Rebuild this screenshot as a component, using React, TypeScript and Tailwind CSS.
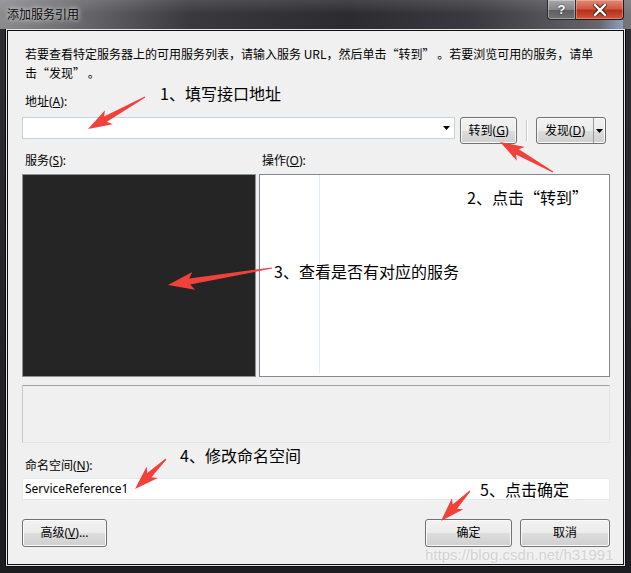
import React from 'react';

const ui = "font-['Noto_Sans','Noto_Sans_CJK_SC',sans-serif]";
const cjk = "font-['Noto_Sans_CJK_SC','Noto_Sans',sans-serif]";
const btn =
  'flex items-center justify-center rounded-[3px] border border-[#707070] bg-[linear-gradient(to_bottom,#f2f2f2_0%,#ebebeb_50%,#dddddd_51%,#cfcfcf_100%)] shadow-[inset_0_0_0_1px_#fbfbfb] text-[12px] text-black';

// tapered red arrow from tail to tip, as the snipping tool draws it
function arrow(tx: number, ty: number, hx: number, hy: number, head = 20, wing = 8) {
  const len = Math.hypot(hx - tx, hy - ty);
  const dx = (hx - tx) / len;
  const dy = (hy - ty) / len;
  const nx = -dy;
  const ny = dx;
  const neckX = hx - dx * head;
  const neckY = hy - dy * head;
  const backX = neckX - dx * 4;
  const backY = neckY - dy * 4;
  const p = (x: number, y: number) => `${x.toFixed(1)},${y.toFixed(1)}`;
  return [
    p(tx + nx * 0.6, ty + ny * 0.6),
    p(neckX + nx * 3, neckY + ny * 3),
    p(backX + nx * wing, backY + ny * wing),
    p(hx, hy),
    p(backX - nx * wing, backY - ny * wing),
    p(neckX - nx * 3, neckY - ny * 3),
    p(tx - nx * 0.6, ty - ny * 0.6),
  ].join(' ');
}

const arrows = [
  { t: [145, 97], h: [88, 129], head: 20, wing: 8 },
  { t: [553, 172], h: [500, 142], head: 20, wing: 8 },
  { t: [272, 268], h: [168, 285], head: 22, wing: 9 },
  { t: [166, 459], h: [135, 489], head: 20, wing: 8 },
  { t: [470, 491], h: [441, 521], head: 20, wing: 8 },
];

const notes = [
  { text: '1、填写接口地址', cls: 'left-[160px] top-[82px]' },
  { text: '2、点击“转到”', cls: 'left-[467px] top-[186px]' },
  { text: '3、查看是否有对应的服务', cls: 'left-[274px] top-[260px]' },
  { text: '4、修改命名空间', cls: 'left-[180px] top-[444px]' },
  { text: '5、点击确定', cls: 'left-[480px] top-[478px]' },
];

function TitleBar() {
  return (
    <div className="relative h-[29px] bg-[linear-gradient(to_right,#8c8c90_0%,#6a6a6e_12%,#3a393e_30%,#2c2b30_55%,#3b3a40_75%,#5e5d63_92%,#77767c_100%)]">
      <div className="absolute inset-x-0 top-0 h-[14px] bg-[linear-gradient(to_bottom,rgba(255,255,255,0.12),rgba(255,255,255,0))]" />
      <div
        className={`absolute left-[7px] top-[6px] text-[12px] leading-[16px] text-[#0a0a0a] ${cjk} [text-shadow:0_0_4px_#d8d8d8,0_0_6px_#cfcfcf]`}
      >
        添加服务引用
      </div>
      <div className="absolute right-[7px] top-0 flex h-[20px]">
        <div className="flex w-[29px] items-center justify-center rounded-bl-[4px] border border-t-0 border-[#2a2a2e] bg-[linear-gradient(to_bottom,#a9a9ad_0%,#85858a_50%,#5d5d62_51%,#707075_100%)] shadow-[inset_0_0_0_1px_rgba(255,255,255,0.35)]">
          <span className="font-['Liberation_Sans',sans-serif] text-[13px] font-bold leading-none text-white [text-shadow:0_0_2px_#222]">
            ?
          </span>
        </div>
        <div className="flex w-[48px] items-center justify-center rounded-br-[4px] border border-l-0 border-t-0 border-[#2a1410] bg-[linear-gradient(to_bottom,#e08a78_0%,#cf5a44_45%,#b8301c_55%,#d2553b_100%)] shadow-[inset_0_0_0_1px_rgba(255,220,210,0.35)]">
          <svg width="14" height="12" viewBox="0 0 14 12">
            <path d="M2 1 L12 11 M12 1 L2 11" stroke="#3a1a14" strokeWidth="4.2" strokeLinecap="square" />
            <path d="M2 1 L12 11 M12 1 L2 11" stroke="#fff" strokeWidth="2.4" strokeLinecap="square" />
          </svg>
        </div>
      </div>
      <div className="absolute right-[8px] top-[20px] h-[9px] w-[24px] bg-[linear-gradient(to_right,rgba(120,160,210,0),rgba(150,190,235,0.6))]" />
    </div>
  );
}

function Label({ children }: { children: React.ReactNode }) {
  return <div className={`text-[12px] leading-[16px] text-black ${ui}`}>{children}</div>;
}

export default function App() {
  return (
    <div className={`relative h-[573px] w-[631px] overflow-hidden bg-[linear-gradient(to_bottom,#2e2e33,#1d1d21)] ${ui}`}>
      <TitleBar />

      {/* client area */}
      <div className="mx-[6px] h-[537px] border border-[#e6e6e6] shadow-[0_0_0_1px_#0b0b0b]">
        <div className="flex h-full flex-col border border-[#0f0f0f] bg-[#f0f0f0] pl-[14px] pr-[13px]">
          <div className={`mt-[13px] whitespace-nowrap pl-[3px] text-[12px] leading-[19px] text-black ${cjk}`}>
            若要查看特定服务器上的可用服务列表，请输入服务 URL，然后单击“转到” 。若要浏览可用的服务，请单
            <br />
            击“发现” 。
          </div>

          <div className="mt-[12px] pl-[3px]">
            <Label>
              地址(<u>A</u>):
            </Label>
          </div>

          <div className="mt-[7px] flex items-start">
            <div className="flex h-[22px] w-[433px] items-center justify-end border border-[#c4d3e3] bg-white pr-[4px]">
              <svg width="7" height="4" viewBox="0 0 7 4">
                <path d="M0 0 H7 L3.5 4 Z" fill="#000" />
              </svg>
            </div>
            <div className={`${btn} ml-[5px] h-[27px] w-[57px]`}>
              转到(<u>G</u>)
            </div>
            <div className="ml-[9px] mt-[3px] h-[21px] w-[2px] border-l border-[#c9c9c9] bg-white" />
            <div className={`${btn} ml-[8px] h-[27px] w-[70px] justify-start overflow-hidden`}>
              <div className="flex h-full flex-1 items-center justify-center border-r border-[#9a9a9a]">
                发现(<u>D</u>)
              </div>
              <div className="flex h-full w-[11px] items-center justify-center">
                <svg width="7" height="4" viewBox="0 0 7 4">
                  <path d="M0 0 H7 L3.5 4 Z" fill="#000" />
                </svg>
              </div>
            </div>
          </div>

          <div className="mt-[9px] flex pl-[3px]">
            <div className="w-[237px]">
              <Label>
                服务(<u>S</u>):
              </Label>
            </div>
            <Label>
              操作(<u>O</u>):
            </Label>
          </div>

          <div className="mt-[5px] flex h-[203px] gap-[3px]">
            <div className="w-[234px] border border-[#8e9299] bg-[#252525]" />
            <div className="flex flex-1 border border-[#828790] bg-white pb-[3px]">
              <div className="w-[60px] border-r border-[#e3edf5]" />
            </div>
          </div>

          <div className="mt-[8px] h-[58px] border border-[#a0a0a0] border-l-[#c8c8c8] border-r-[#e4e4e4] border-b-[#e4e4e4] bg-[#f0f0f0]" />

          <div className="mt-[15px] pl-[3px]">
            <Label>
              命名空间(<u>N</u>):
            </Label>
          </div>

          <div className="mt-[4px] flex h-[22px] items-center border border-[#e3e9ef] bg-white pl-[2px] text-[12px] text-black">
            ServiceReference1
          </div>

          <div className="mt-[19px] flex items-start">
            <div className={`${btn} h-[28px] w-[85px]`}>
              高级(<u>V</u>)...
            </div>
            <div className="flex-1" />
            <div className={`${btn} h-[28px] w-[87px] border-[#3c7fb1] shadow-[inset_0_0_0_1px_#97dcf5]`}>确定</div>
            <div className={`${btn} ml-[8px] h-[28px] w-[90px]`}>取消</div>
          </div>
        </div>
      </div>

      {/* annotations over the dialog */}
      <svg className="pointer-events-none absolute inset-0" width="631" height="573">
        {arrows.map((a, i) => (
          <polygon key={i} points={arrow(a.t[0], a.t[1], a.h[0], a.h[1], a.head, a.wing)} fill="#f2403a" />
        ))}
      </svg>
      {notes.map((n) => (
        <div
          key={n.text}
          className={`absolute ${n.cls} whitespace-nowrap text-[16px] leading-[22px] text-black ${cjk}`}
        >
          {n.text}
        </div>
      ))}
      <div className="absolute left-[425px] top-[545px] whitespace-nowrap font-['Liberation_Sans',sans-serif] text-[15px] leading-[20px] text-[#d2d2d2] [text-shadow:0_0_2px_rgba(255,255,255,0.9)]">
        https://blog.csdn.net/h31991
      </div>
    </div>
  );
}
